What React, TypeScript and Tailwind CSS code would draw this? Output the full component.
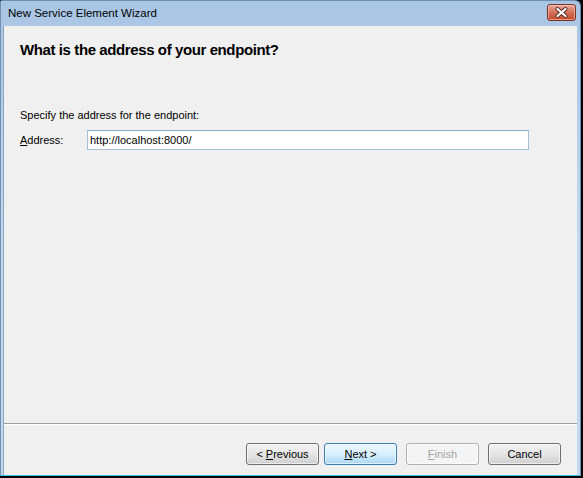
import React from "react";

const font = { fontFamily: '"Liberation Sans", Arial, sans-serif' };

function CloseGlyph() {
  return (
    <svg width="13" height="11" viewBox="0 0 13 11">
      <path d="M2.5 2 L10.5 9 M10.5 2 L2.5 9" stroke="#5a2a22" strokeWidth="4" strokeLinecap="round" />
      <path d="M2.5 2 L10.5 9 M10.5 2 L2.5 9" stroke="#ffffff" strokeWidth="2.2" strokeLinecap="round" />
    </svg>
  );
}

function WizardButton({
  children,
  variant = "normal",
}: {
  children: React.ReactNode;
  variant?: "normal" | "default" | "disabled";
}) {
  const skin =
    variant === "default"
      ? "border-[#3c7fb1] bg-gradient-to-b from-[#eaf6fd] via-[#d9f0fc] to-[#a7d9f5] text-black"
      : variant === "disabled"
      ? "border-[#adb2b5] bg-[#f4f4f4] text-[#a3a3a3]"
      : "border-[#707070] bg-gradient-to-b from-[#f2f2f2] via-[#e6e6e6] to-[#cfcfcf] text-black";
  return (
    <div
      className={`w-[73px] h-[22px] rounded-[3px] border flex items-center justify-center text-[11px] leading-none shadow-[inset_0_0_0_1px_rgba(255,255,255,0.6)] ${skin}`}
    >
      {children}
    </div>
  );
}

export default function App() {
  return (
    <div className="w-[583px] h-[478px] bg-black overflow-hidden" style={font}>
      <div className="w-[581px] h-[476px] rounded-tr-[6px] rounded-tl-[2px] border border-[#6f8fb5] border-b-[#39c0ec] bg-gradient-to-b from-[#a9c5e4] via-[#c4d8ee] to-[#c4d8ee] flex flex-col pl-[2px] pr-[3px]">
        {/* title bar */}
        <div className="h-[25px] flex items-center justify-between pl-[5px] pr-[1px]">
          <span className="text-[11.5px] text-black leading-none">New Service Element Wizard</span>
          <div className="mt-[-2px] w-[29px] h-[17px] rounded-[3px] border border-[#7a3325] bg-gradient-to-b from-[#e9a99a] via-[#d3705a] to-[#c24a30] flex items-center justify-center shadow-[inset_0_0_0_1px_rgba(255,220,210,0.5)]">
            <CloseGlyph />
          </div>
        </div>

        {/* client */}
        <div className="flex-1 flex flex-col bg-[#f0f0f0] border-l border-[#8ea5c0]">
          <h1 className="mt-[15px] ml-[16px] text-[15px] leading-[18px] font-bold tracking-[-0.4px] text-black">
            What is the address of your endpoint?
          </h1>

          <p className="mt-[50px] ml-[16px] text-[11px] leading-[13px] text-black">
            Specify the address for the endpoint:
          </p>

          <div className="mt-[8px] ml-[16px] flex items-center">
            <span className="w-[67px] text-[11px] leading-[13px] text-black">
              <span className="underline underline-offset-[1px]">A</span>ddress:
            </span>
            <div className="w-[442px] h-[20px] bg-white border border-[#a9bed8] border-t-[#8ea9cc] flex items-center pl-[2px] text-[11px] text-black">
              http://localhost:8000/
            </div>
          </div>

          <div className="flex-1" />

          <div className="border-t border-[#a0a0a0] border-b border-b-white" />

          <div className="mt-[18px] mb-[10px] flex justify-end pr-[16px]">
            <WizardButton>
              &lt; <span className="underline underline-offset-[1px] ml-[3px]">P</span>revious
            </WizardButton>
            <div className="w-[5px]" />
            <WizardButton variant="default">
              <span className="underline underline-offset-[1px]">N</span>ext &gt;
            </WizardButton>
            <div className="w-[9px]" />
            <WizardButton variant="disabled">
              <span className="underline underline-offset-[1px]">F</span>inish
            </WizardButton>
            <div className="w-[9px]" />
            <WizardButton>Cancel</WizardButton>
          </div>
        </div>
      </div>
    </div>
  );
}
